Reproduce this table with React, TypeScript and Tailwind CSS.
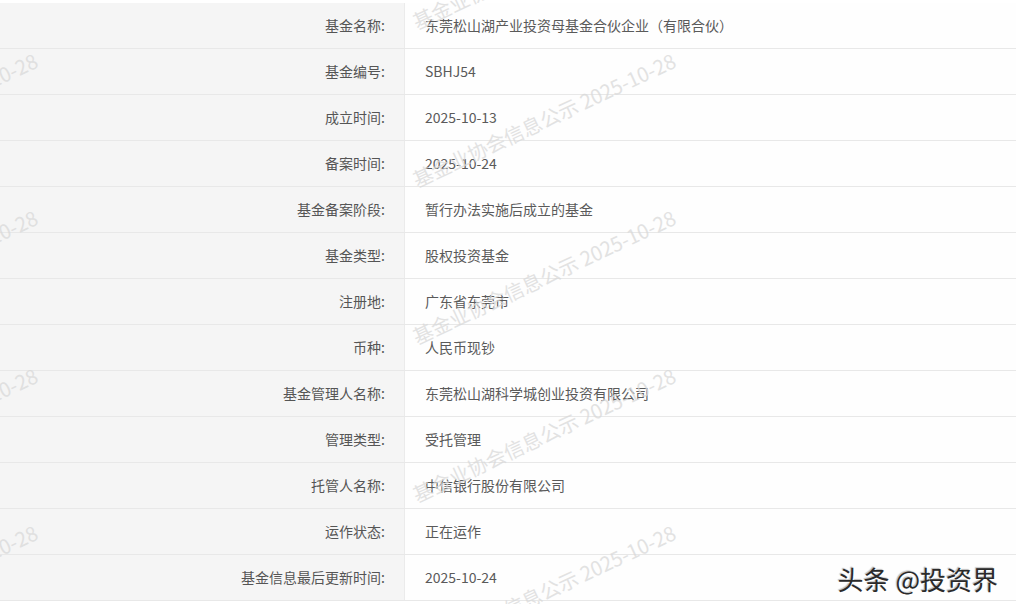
import React from "react";

const rows: [string, string][] = [
  ["基金名称:", "东莞松山湖产业投资母基金合伙企业（有限合伙）"],
  ["基金编号:", "SBHJ54"],
  ["成立时间:", "2025-10-13"],
  ["备案时间:", "2025-10-24"],
  ["基金备案阶段:", "暂行办法实施后成立的基金"],
  ["基金类型:", "股权投资基金"],
  ["注册地:", "广东省东莞市"],
  ["币种:", "人民币现钞"],
  ["基金管理人名称:", "东莞松山湖科学城创业投资有限公司"],
  ["管理类型:", "受托管理"],
  ["托管人名称:", "中信银行股份有限公司"],
  ["运作状态:", "正在运作"],
  ["基金信息最后更新时间:", "2025-10-24"],
];

const marks: string[] = [
  "left-[544px] top-[-38px]",
  "left-[544px] top-[120px]",
  "left-[544px] top-[277px]",
  "left-[544px] top-[435px]",
  "left-[544px] top-[592px]",
  "left-[-94px] top-[-38px]",
  "left-[-94px] top-[120px]",
  "left-[-94px] top-[277px]",
  "left-[-94px] top-[435px]",
  "left-[-94px] top-[592px]",
];

export default function App() {
  return (
    <div
      className="relative w-[1016px] h-[604px] overflow-hidden bg-white"
      style={{ fontFamily: '"Noto Sans CJK SC", "Noto Sans", sans-serif' }}
    >
      <div className="flex flex-col pt-[3px]">
        {rows.map(([k, v], i) => (
          <div key={i} className="flex h-[46px] border-b border-[#e8e8e8]">
            <div className="w-[405px] shrink-0 bg-[#f5f5f5] border-r border-[#ebebeb] flex items-center justify-end pr-[19px] text-[14px] text-[#555]">
              {k}
            </div>
            <div className="flex-1 bg-[#fefefe] flex items-center pl-[20px] text-[14px] text-[#5a5a5a]">
              {v}
            </div>
          </div>
        ))}
      </div>

      <div className="absolute inset-0 pointer-events-none">
        {marks.map((m, i) => (
          <span
            key={i}
            className={`absolute ${m} -translate-x-1/2 -translate-y-1/2 rotate-[-25deg] whitespace-nowrap text-[20px] text-[#d9d9d9] opacity-75`}
          >
            基金业协会信息公示 2025-10-28
          </span>
        ))}
      </div>

      <div className="absolute right-[18px] bottom-[12px] text-[26px] leading-none text-[#2a2a2a] [text-shadow:1px_1px_1px_#ffffff,-1px_-1px_1px_#bbbbbb]">
        头条 @投资界
      </div>
    </div>
  );
}
